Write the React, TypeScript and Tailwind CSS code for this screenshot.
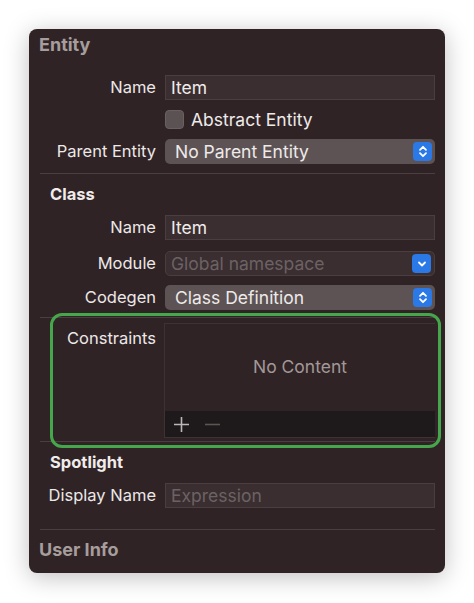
import React from "react";

const font = { fontFamily: "Inter, 'Noto Sans', 'Liberation Sans', sans-serif" };

function Stepper() {
  return (
    <div className="w-[19px] h-[19px] rounded-[4px] bg-[#2a79e6] flex items-center justify-center">
      <svg width="10" height="13" viewBox="0 0 10 13" fill="none" stroke="white" strokeWidth="1.8" strokeLinecap="round" strokeLinejoin="round">
        <path d="M2 4.8 L5 1.8 L8 4.8" />
        <path d="M2 8.2 L5 11.2 L8 8.2" />
      </svg>
    </div>
  );
}

function Chevron() {
  return (
    <div className="w-[19px] h-[19px] rounded-[4px] bg-[#2a79e6] flex items-center justify-center">
      <svg width="10" height="8" viewBox="0 0 10 8" fill="none" stroke="white" strokeWidth="1.8" strokeLinecap="round" strokeLinejoin="round">
        <path d="M2 2.5 L5 5.5 L8 2.5" />
      </svg>
    </div>
  );
}

function Label({ children }: { children: React.ReactNode }) {
  return <div className="w-[127px] shrink-0 text-right text-[16.5px] text-[#ece8e8] leading-none">{children}</div>;
}

function TextField({ value, placeholder }: { value?: string; placeholder?: boolean }) {
  return (
    <div className="w-[270px] h-[25px] bg-[#3a2e30] border border-[#4a3e40] flex items-center pl-[5px]">
      <span className={"text-[17.5px] leading-none " + (placeholder ? "text-[#6c6264]" : "text-[#f0ecec]")}>{value}</span>
    </div>
  );
}

function Popup({ value }: { value: string }) {
  return (
    <div className="w-[270px] h-[25px] rounded-[5px] bg-[#5d5354] flex items-center justify-between pl-[10px] pr-[3px]">
      <span className="text-[17.5px] leading-none text-[#eeeaea]">{value}</span>
      <Stepper />
    </div>
  );
}

function Separator() {
  return <div className="ml-[11px] mr-[10px] h-px bg-[#4a3e40]" />;
}

export default function App() {
  return (
    <div className="w-[474px] h-[603px] bg-white pt-[29px] pl-[29px]" style={font}>
      <div className="w-[416px] h-[544px] rounded-[8px] bg-[#302325] shadow-[0_4px_24px_rgba(0,0,0,0.25)] flex flex-col overflow-hidden">
        <div className="pl-[10px] pt-[1px] h-[30px] text-[18px] font-bold text-[#a69d9d] leading-[20px] flex items-center">Entity</div>

        <div className="mt-[16px] flex items-center gap-[9px]">
          <Label>Name</Label>
          <TextField value="Item" />
        </div>

        <div className="mt-[10px] flex items-center gap-[7px] pl-[136px]">
          <div className="w-[19px] h-[19px] rounded-[4px] bg-[#5b5253] border border-[#6a6061]" />
          <span className="text-[17.5px] leading-none text-[#eeeaea]">Abstract Entity</span>
        </div>

        <div className="mt-[10px] flex items-center gap-[9px]">
          <Label>Parent Entity</Label>
          <Popup value="No Parent Entity" />
        </div>

        <div className="mt-[9px]">
          <Separator />
        </div>

        <div className="mt-[10px] pl-[21px] text-[16.5px] font-bold text-[#f0ecec] leading-[20px]">Class</div>

        <div className="mt-[11px] flex items-center gap-[9px]">
          <Label>Name</Label>
          <TextField value="Item" />
        </div>

        <div className="mt-[11px] flex items-center gap-[9px]">
          <Label>Module</Label>
          <div className="w-[270px] h-[25px] rounded-[5px] bg-[#3a2e30] border border-[#4a3e40] flex items-center justify-between pl-[5px] pr-[3px]">
            <span className="text-[17.5px] leading-none text-[#6c6264]">Global namespace</span>
            <Chevron />
          </div>
        </div>

        <div className="mt-[9px] flex items-center gap-[9px]">
          <Label>Codegen</Label>
          <Popup value="Class Definition" />
        </div>

        <div className="relative mt-[7px]">
          <Separator />
          <div className="mt-[5px] flex gap-[8px] h-[115px]">
            <div className="w-[127px] shrink-0 text-right text-[16.5px] text-[#ece8e8] leading-none pt-[7px]">Constraints</div>
            <div className="w-[271px] flex flex-col border-l border-t border-[#3e3234]">
              <div className="flex-1 flex items-center justify-center text-[17.5px] text-[#a29898]">No Content</div>
              <div className="h-[27px] bg-[#1e1a1b] border-b border-[#3e3234] flex items-center gap-[14px] pl-[8px]">
                <svg width="17" height="17" viewBox="0 0 17 17" stroke="#bdb6b6" strokeWidth="1.6">
                  <path d="M8.5 1 V16 M1 8.5 H16" />
                </svg>
                <svg width="17" height="17" viewBox="0 0 17 17" stroke="#5c5455" strokeWidth="1.6">
                  <path d="M1 8.5 H16" />
                </svg>
              </div>
            </div>
          </div>
          <div className="mt-[3px]">
            <Separator />
          </div>
          <div className="absolute left-[21px] top-[-4px] w-[391px] h-[135px] rounded-[12px] border-[3px] border-[#46a64c] pointer-events-none" />
        </div>

        <div className="mt-[10px] pl-[21px] text-[16.5px] font-bold text-[#f0ecec] leading-[20px]">Spotlight</div>

        <div className="mt-[11px] flex items-center gap-[9px]">
          <Label>Display Name</Label>
          <TextField value="Expression" placeholder />
        </div>

        <div className="mt-[21px]">
          <Separator />
        </div>

        <div className="mt-[10px] pl-[10px] text-[18px] font-bold text-[#a69d9d] leading-[20px]">User Info</div>
      </div>
    </div>
  );
}
